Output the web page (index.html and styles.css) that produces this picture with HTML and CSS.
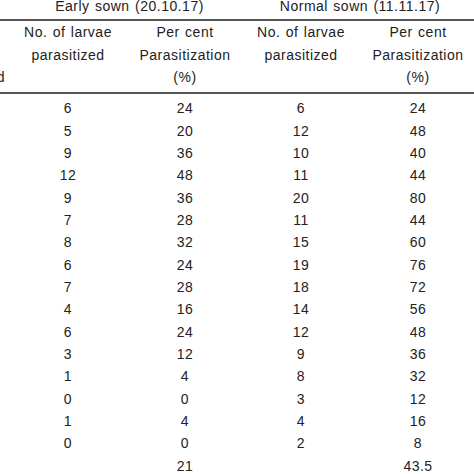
FILE: index.html
```html
<!DOCTYPE html>
<html>
<head>
<meta charset="utf-8">
<link rel="stylesheet" href="styles.css">
</head>
<body>
<table class="data">
  <colgroup>
    <col class="c0"><col class="c1"><col class="c2"><col class="c3"><col class="c4">
  </colgroup>
  <thead>
    <tr class="title">
      <th></th>
      <th colspan="2" class="early">Early sown (20.10.17)</th>
      <th colspan="2">Normal sown (11.11.17)</th>
    </tr>
    <tr class="head">
      <th class="period">Period</th>
      <th>No. of larvae<br>parasitized</th>
      <th>Per cent<br>Parasitization<br>(%)</th>
      <th>No. of larvae<br>parasitized</th>
      <th>Per cent<br>Parasitization<br>(%)</th>
    </tr>
  </thead>
  <tbody>
    <tr class="first"><td></td><td>6</td><td>24</td><td>6</td><td>24</td></tr>
    <tr><td></td><td>5</td><td>20</td><td>12</td><td>48</td></tr>
    <tr><td></td><td>9</td><td>36</td><td>10</td><td>40</td></tr>
    <tr><td></td><td>12</td><td>48</td><td>11</td><td>44</td></tr>
    <tr><td></td><td>9</td><td>36</td><td>20</td><td>80</td></tr>
    <tr><td></td><td>7</td><td>28</td><td>11</td><td>44</td></tr>
    <tr><td></td><td>8</td><td>32</td><td>15</td><td>60</td></tr>
    <tr><td></td><td>6</td><td>24</td><td>19</td><td>76</td></tr>
    <tr><td></td><td>7</td><td>28</td><td>18</td><td>72</td></tr>
    <tr><td></td><td>4</td><td>16</td><td>14</td><td>56</td></tr>
    <tr><td></td><td>6</td><td>24</td><td>12</td><td>48</td></tr>
    <tr><td></td><td>3</td><td>12</td><td>9</td><td>36</td></tr>
    <tr><td></td><td>1</td><td>4</td><td>8</td><td>32</td></tr>
    <tr><td></td><td>0</td><td>0</td><td>3</td><td>12</td></tr>
    <tr><td></td><td>1</td><td>4</td><td>4</td><td>16</td></tr>
    <tr><td></td><td>0</td><td>0</td><td>2</td><td>8</td></tr>
    <tr><td></td><td></td><td>21</td><td></td><td>43.5</td></tr>
  </tbody>
</table>
</body>
</html>
```
FILE: styles.css
```css
html, body {
  margin: 0;
  padding: 0;
  background: #fff;
  overflow: hidden;
  width: 474px;
  height: 474px;
}

.data {
  border-collapse: separate;
  border-spacing: 0;
  table-layout: fixed;
  width: 528px;
  margin-left: -51px;
  margin-top: -5px;
  font-family: "Liberation Sans", Arial, sans-serif;
  font-size: 14px;
  line-height: 22.33px;
  letter-spacing: 0.5px;
  word-spacing: 1px;
  color: #222;
}

.c0 { width: 60px; }
.c1 { width: 118px; }
.c2 { width: 116px; }
.c3 { width: 116px; }
.c4 { width: 118px; }

.data th,
.data td {
  padding: 0;
  text-align: center;
  font-weight: normal;
  vertical-align: top;
  white-space: nowrap;
}

.title th {
  padding-bottom: 1.67px;
  border-bottom: 2px solid #555;
}

.title .early {
  padding-left: 7px;
}

.head th {
  padding-top: 0.5px;
  padding-bottom: 3.5px;
  border-bottom: 2px solid #555;
}

.head .period {
  text-align: right;
  vertical-align: bottom;
  padding-right: 4px;
}

.first td {
  padding-top: 3.5px;
}
```
